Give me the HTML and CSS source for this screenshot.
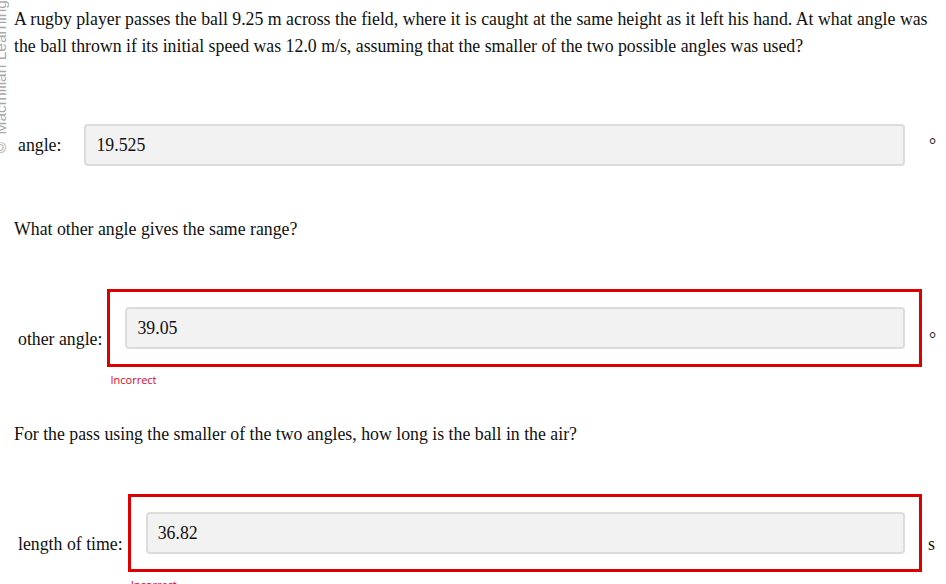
FILE: index.html
```html
<!DOCTYPE html>
<html>
<head>
<meta charset="utf-8">
<link rel="stylesheet" href="styles.css">
</head>
<body>
<div class="watermark">© Macmillan Learning</div>
<div class="page">
  <p class="question">A rugby player passes the ball 9.25 m across the field, where it is caught at the same height as it left his hand. At what angle was the ball thrown if its initial speed was 12.0 m/s, assuming that the smaller of the two possible angles was used?</p>

  <div class="row">
    <span class="label">angle:</span>
    <div class="field">
      <div class="box"><div class="input">19.525</div></div>
    </div>
    <span class="unit deg">°</span>
  </div>

  <p class="question">What other angle gives the same range?</p>

  <div class="row">
    <span class="label">other angle:</span>
    <div class="field">
      <div class="box wrong"><div class="input">39.05</div></div>
      <div class="feedback">Incorrect</div>
    </div>
    <span class="unit deg">°</span>
  </div>

  <p class="question">For the pass using the smaller of the two angles, how long is the ball in the air?</p>

  <div class="row">
    <span class="label">length of time:</span>
    <div class="field">
      <div class="box wrong"><div class="input">36.82</div></div>
      <div class="feedback">Incorrect</div>
    </div>
    <span class="unit">s</span>
  </div>
</div>
</body>
</html>
```

FILE: styles.css
```css
html, body {
  margin: 0;
  padding: 0;
  background: #ffffff;
  overflow: hidden;
}

body {
  font-family: "Liberation Serif", "Times New Roman", serif;
  font-size: 17.8px;
  color: #111111;
  position: relative;
  height: 584px;
}

.watermark {
  position: absolute;
  left: -9px;
  top: 0;
  writing-mode: vertical-rl;
  transform: rotate(180deg);
  font-family: "Liberation Sans", Arial, sans-serif;
  font-size: 15.5px;
  line-height: 20px;
  color: #a8a8a8;
  white-space: nowrap;
}

.page {
  padding: 6px 6px 0 14px;
}

.question {
  margin: 0 -6px 46px 0;
  line-height: 27px;
}

.row {
  display: flex;
  align-items: center;
  margin-bottom: 32px;
}

.label {
  padding-left: 4px;
  margin-right: 5px;
  line-height: 20px;
  white-space: nowrap;
}

.field {
  flex: 1;
  display: flex;
  flex-direction: column;
}

.box {
  border: 3px solid transparent;
  padding: 15px 14px 15px 15px;
}

.box.wrong {
  border-color: #dd0000;
}

.input {
  height: 38px;
  border: 2px solid #dcdcdc;
  border-radius: 4px;
  background: #f2f2f2;
  padding: 0 10px;
  display: flex;
  align-items: center;
  line-height: 20px;
}

.feedback {
  margin-top: 4px;
  padding-left: 3px;
  font-family: "Open Sans", "Liberation Sans", sans-serif;
  font-size: 11px;
  font-weight: 500;
  line-height: 18px;
  color: #e2002a;
}

.unit {
  width: 12px;
  margin-left: 6px;
  line-height: 20px;
}

.unit.deg {
  margin-left: 7px;
  width: 11px;
}
```
